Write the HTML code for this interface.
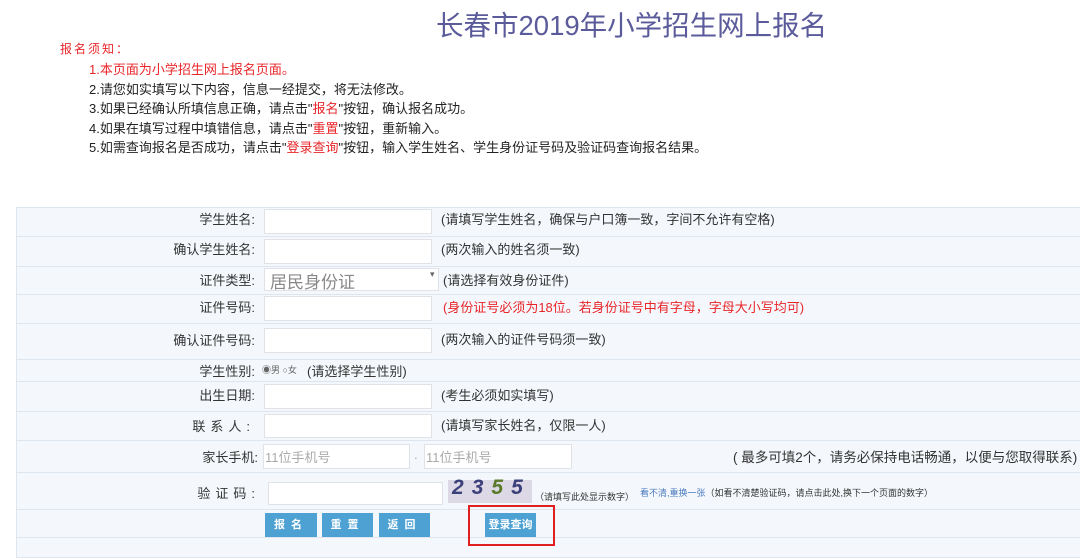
<!DOCTYPE html>
<html><head><meta charset="utf-8"><style>
*{margin:0;padding:0;box-sizing:border-box}
body{width:1080px;height:560px;background:#fff;position:relative;overflow:hidden;font-family:"Liberation Sans","Noto Sans CJK SC",sans-serif;font-size:13px;color:#333}
.a{position:absolute;white-space:nowrap}
.title{left:436px;top:3px;font-size:27.5px;color:#5b5b9b}
.r{color:#e8262a}
.row{position:absolute;left:16px;width:1064px;background:#f4f8fc;border-top:1px solid #dde6ee;border-left:1px solid #dde6ee}
.inp{position:absolute;background:#fff;border:1px solid #dfe3e8}
.btn{position:absolute;background:#4ea1d3;color:#fff;font-size:11px;font-weight:bold;text-align:center;line-height:24px;top:513px;height:24px;letter-spacing:6px}
.t{margin-top:-3px}
</style></head><body>
<div class="a title">长春市2019年小学招生网上报名</div>
<div class="a r" style="left:60px;top:40px;font-size:12px;letter-spacing:2px">报名须知：</div>
<div class="a" style="left:89px;top:60px;line-height:19.5px;font-size:13px;color:#222">
<div class="r">1.本页面为小学招生网上报名页面。</div>
<div>2.请您如实填写以下内容，信息一经提交，将无法修改。</div>
<div>3.如果已经确认所填信息正确，请点击"<span class="r">报名</span>"按钮，确认报名成功。</div>
<div>4.如果在填写过程中填错信息，请点击"<span class="r">重置</span>"按钮，重新输入。</div>
<div>5.如需查询报名是否成功，请点击"<span class="r">登录查询</span>"按钮，输入学生姓名、学生身份证号码及验证码查询报名结果。</div>
</div>

<div class="row" style="top:207px;height:29px"></div>
<div class="row" style="top:236px;height:30px"></div>
<div class="row" style="top:266px;height:28px"></div>
<div class="row" style="top:294px;height:29px"></div>
<div class="row" style="top:323px;height:36px"></div>
<div class="row" style="top:359px;height:22px"></div>
<div class="row" style="top:381px;height:30px"></div>
<div class="row" style="top:411px;height:29px"></div>
<div class="row" style="top:440px;height:32px"></div>
<div class="row" style="top:472px;height:37px"></div>
<div class="row" style="top:509px;height:28px"></div>
<div class="row" style="top:537px;height:21px;border-bottom:1px solid #dde6ee"></div>

<div class="a" style="left:0;width:255px;text-align:right;top:209px">学生姓名:</div>
<div class="inp" style="left:264px;top:209px;width:168px;height:25px"></div>
<div class="a" style="left:441px;top:209px">(请填写学生姓名，确保与户口簿一致，字间不允许有空格)</div>

<div class="a" style="left:0;width:255px;text-align:right;top:239px">确认学生姓名:</div>
<div class="inp" style="left:264px;top:239px;width:168px;height:25px"></div>
<div class="a" style="left:441px;top:239px">(两次输入的姓名须一致)</div>

<div class="a" style="left:0;width:255px;text-align:right;top:270px">证件类型:</div>
<div class="inp" style="left:264px;top:268px;width:175px;height:23px"></div>
<div class="a" style="left:270px;top:268px;font-size:17px;color:#888">居民身份证</div>
<div class="a" style="left:430px;top:269px;font-size:9px;color:#666">▾</div>
<div class="a" style="left:443px;top:270px">(请选择有效身份证件)</div>

<div class="a" style="left:0;width:255px;text-align:right;top:297px">证件号码:</div>
<div class="inp" style="left:264px;top:296px;width:168px;height:25px"></div>
<div class="a r" style="left:443px;top:297px">(身份证号必须为18位。若身份证号中有字母，字母大小写均可)</div>

<div class="a" style="left:0;width:255px;text-align:right;top:330px">确认证件号码:</div>
<div class="inp" style="left:264px;top:328px;width:168px;height:25px"></div>
<div class="a" style="left:441px;top:329px">(两次输入的证件号码须一致)</div>

<div class="a" style="left:0;width:255px;text-align:right;top:361px">学生性别:</div>
<div class="a" style="left:262px;top:363px;font-size:9px;color:#666">◉男 ○女</div>
<div class="a" style="left:307px;top:361px">(请选择学生性别)</div>

<div class="a" style="left:0;width:255px;text-align:right;top:385px">出生日期:</div>
<div class="inp" style="left:264px;top:384px;width:168px;height:25px"></div>
<div class="a" style="left:441px;top:385px">(考生必须如实填写)</div>

<div class="a" style="left:0;width:255px;text-align:right;top:416px;letter-spacing:5px">联系人:</div>
<div class="inp" style="left:264px;top:414px;width:168px;height:24px"></div>
<div class="a" style="left:441px;top:415px">(请填写家长姓名，仅限一人)</div>

<div class="a" style="left:0;width:258px;text-align:right;top:447px">家长手机:</div>
<div class="inp" style="left:263px;top:444px;width:147px;height:25px"></div>
<div class="a" style="left:265px;top:447px;color:#aaa">11位手机号</div>
<div class="a" style="left:414px;top:447px;color:#aaa">.</div>
<div class="inp" style="left:424px;top:444px;width:148px;height:25px"></div>
<div class="a" style="left:426px;top:447px;color:#aaa">11位手机号</div>
<div class="a" style="left:733px;top:446px;font-size:13.5px">(&nbsp;最多可填2个，请务必保持电话畅通，以便与您取得联系)</div>

<div class="a" style="left:0;width:260px;text-align:right;top:483px;letter-spacing:5px">验证码:</div>
<div class="inp" style="left:268px;top:482px;width:175px;height:23px"></div>
<div class="a" style="left:448px;top:480px;width:84px;height:23px;background:#dcd8e6"></div>
<div class="a" style="left:452px;top:476px;font-size:21px;font-style:italic;font-weight:bold;color:#3b3f7a;letter-spacing:8px">2<span>3</span><span style="color:#5a7a2a">5</span>5</div>
<div class="a" style="left:535px;top:490px;font-size:9px">（请填写此处显示数字）</div>
<div class="a" style="left:640px;top:486px;font-size:9px"><span style="color:#4a7ac0">看不清,重换一张</span>（如看不清楚验证码，请点击此处,换下一个页面的数字）</div>

<div class="btn" style="left:265px;width:52px">报名</div>
<div class="btn" style="left:322px;width:51px">重置</div>
<div class="btn" style="left:379px;width:51px">返回</div>
<div class="btn" style="left:485px;width:51px;letter-spacing:0">登录查询</div>
<div class="a" style="left:468px;top:505px;width:87px;height:41px;border:2px solid #e02020"></div>
</body></html>
